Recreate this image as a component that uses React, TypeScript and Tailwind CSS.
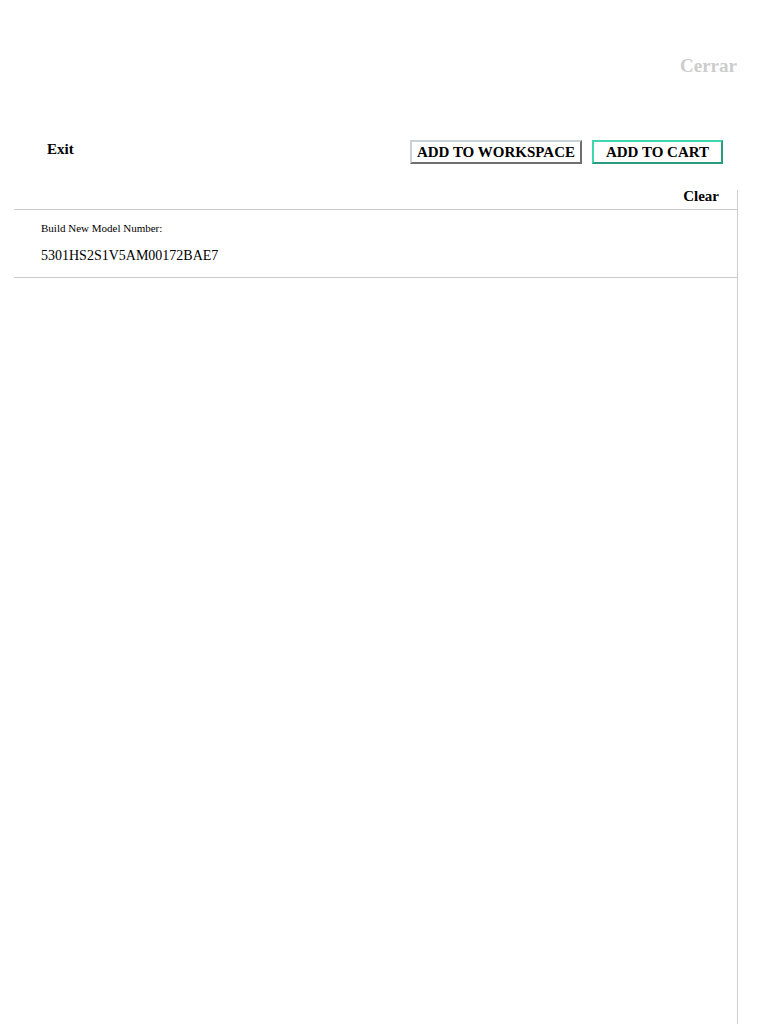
export default function App() {
  return (
    <div className="min-h-[1024px] bg-white font-['Liberation_Serif',serif] text-black flex flex-col">
      <div className="flex justify-end pt-[53px] pr-[31px]">
        <span className="text-[19px] font-bold leading-[26px] text-[#cccccc]">Cerrar</span>
      </div>

      <div className="mt-[61px] flex items-center justify-between pl-[47px] pr-[45px]">
        <span className="text-[15px] font-bold leading-[20px] -mt-[6px]">Exit</span>
        <div className="flex items-center gap-[10px]">
          <button className="h-[24px] border-2 border-t-[#c9d1d9] border-l-[#c9d1d9] border-r-[#6f6f6f] border-b-[#6f6f6f] bg-white px-[5px] text-[15px] font-bold leading-[18px]">
            ADD TO WORKSPACE
          </button>
          <button className="h-[24px] w-[131px] border-2 border-t-[#3fd6ab] border-l-[#3fd6ab] border-r-[#2a9c7e] border-b-[#2a9c7e] bg-white text-[15px] font-bold leading-[18px]">
            ADD TO CART
          </button>
        </div>
      </div>

      <div className="ml-[14px] mt-[26px] flex w-[724px] flex-1 flex-col border-r border-[#cccccc]">
        <div className="flex h-[19px] items-start justify-end pr-[18px]">
          <span className="-mt-[4px] text-[15px] font-bold leading-[20px]">Clear</span>
        </div>
        <div className="border-y border-[#cccccc] pl-[27px] pt-[11px] pb-[11px]">
          <div className="text-[11px] leading-[14px]">Build New Model Number:</div>
          <div className="mt-[11px] text-[14px] leading-[20px]">5301HS2S1V5AM00172BAE7</div>
        </div>
      </div>
    </div>
  );
}
